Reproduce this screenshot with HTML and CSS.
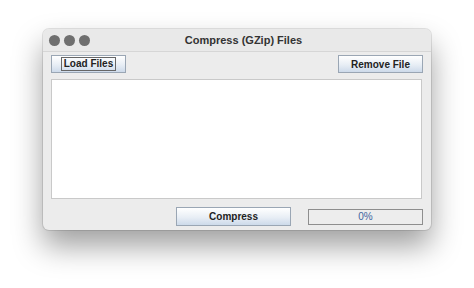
FILE: index.html
```html
<!DOCTYPE html>
<html lang="en">
  <head>
    <meta charset="UTF-8" />
    <title>Compress (GZip) Files</title>
    <link rel="stylesheet" href="styles.css">
  </head>
  <body>
    <div class="desk">
      <div class="window">
        <div class="titlebar">
          <div class="lights">
            <span class="light"></span>
            <span class="light"></span>
            <span class="light"></span>
          </div>
          <div class="title">Compress (GZip) Files</div>
        </div>
        <div class="toolbar">
          <button class="btn load"><span class="focus">Load Files</span></button>
          <button class="btn remove">Remove File</button>
        </div>
        <div class="filelist"></div>
        <div class="bottom">
          <button class="btn wide">Compress</button>
          <div class="progress">0%</div>
        </div>
      </div>
    </div>
  </body>
</html>
```

FILE: styles.css
```css
body {
  margin: 0;
  background: white;
  font-family: "Liberation Sans", Arial, sans-serif;
}
.desk {
  padding: 29px 43px 58px 43px;
  background: white;
}
.window {
  width: 388px;
  height: 201px;
  background: #ececec;
  border-radius: 6px;
  box-shadow: 0 16px 30px rgba(0, 0, 0, 0.38), 0 0 0 1px rgba(0, 0, 0, 0.1);
  overflow: hidden;
}
.titlebar {
  height: 22px;
  display: flex;
  align-items: center;
  background: #e9e9e9;
  border-bottom: 1px solid #d6d6d6;
}
.lights {
  display: flex;
  gap: 4px;
  padding-left: 6px;
}
.light {
  width: 11px;
  height: 11px;
  border-radius: 50%;
  background: #6f6f6f;
}
.title {
  flex: 1;
  text-align: center;
  padding-right: 34px;
  font-size: 11px;
  font-weight: bold;
  color: #333;
}
.toolbar {
  display: flex;
  justify-content: space-between;
  padding: 3px 8px 0 8px;
}
.btn {
  height: 18px;
  padding: 0;
  border: 1px solid #9aa6b4;
  background: linear-gradient(#ffffff, #e8eef5 55%, #cddaea);
  font-family: "Liberation Sans", Arial, sans-serif;
  font-size: 10px;
  font-weight: bold;
  color: #222;
  white-space: nowrap;
  display: flex;
  align-items: center;
  justify-content: center;
}
.focus {
  border: 1px solid #666;
  padding: 0 2px;
  line-height: 12px;
}
.load {
  width: 75px;
}
.remove {
  width: 85px;
}
.filelist {
  margin: 6px 9px 0 8px;
  height: 118px;
  background: white;
  border: 1px solid #c9c9c9;
}
.bottom {
  display: flex;
  align-items: center;
  justify-content: flex-end;
  gap: 17px;
  padding: 8px 8px 0 0;
}
.wide {
  width: 115px;
  height: 19px;
}
.progress {
  width: 113px;
  height: 14px;
  border: 1px solid #8e8e8e;
  background: #ededed;
  text-align: center;
  font-size: 10px;
  line-height: 14px;
  color: #3f64a0;
}
```
